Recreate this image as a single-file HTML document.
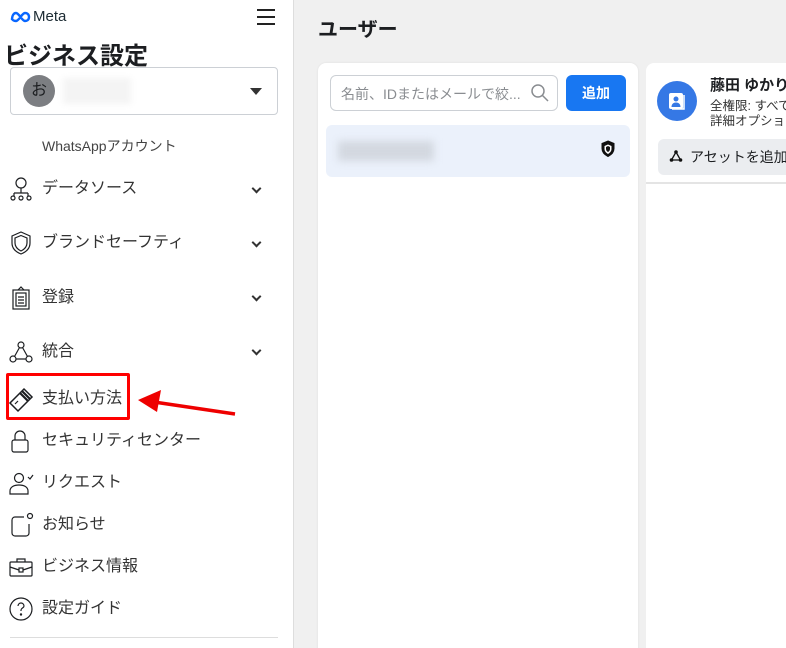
<!DOCTYPE html>
<html><head><meta charset="utf-8"><style>
*{margin:0;padding:0;box-sizing:border-box}
html,body{width:786px;height:648px;overflow:hidden}
body{background:#f0f0f0;font-family:"Liberation Sans","Noto Sans CJK JP",sans-serif;position:relative;color:#1c1e21}
.a{position:absolute}
#side{left:0;top:0;width:294px;height:648px;background:#fff;border-right:1px solid #ddd}
.it{position:absolute;left:42px;font-size:16px;color:#333;line-height:20px}
.chev{position:absolute;left:253px;width:7px;height:7px;border-right:2px solid #333;border-bottom:2px solid #333;transform:rotate(45deg)}
svg.ic{position:absolute;left:8px;fill:none;stroke:#1c1e21;stroke-width:1.2}
</style></head><body>
<div id="side" class="a">
  <svg class="a" style="left:10px;top:11px" width="22" height="12" viewBox="0 0 22 12"><path d="M2 9C2 4 4 2 6 2c3 0 6 8 9 8 2 0 4-1 4-4s-2-4-4-4c-3 0-6 8-9 8-2 0-4-1-4-3" fill="none" stroke="#0866ff" stroke-width="2.4"/></svg>
  <div class="a" style="left:33px;top:8px;font-size:15px;color:#1c2b33">Meta</div>
  <div class="a" style="left:257px;top:9px;width:18px;height:2px;background:#222;box-shadow:0 7px 0 #222,0 14px 0 #222"></div>
  <div class="a" style="left:4px;top:36px;font-size:24px;font-weight:bold;color:#1c1e21">ビジネス設定</div>
  <div class="a" style="left:10px;top:67px;width:268px;height:48px;border:1px solid #ccd0d5;border-radius:4px"></div>
  <div class="a" style="left:23px;top:75px;width:32px;height:32px;border-radius:50%;background:#7c7e82;color:#1c1e21;font-size:16px;text-align:center;line-height:32px">お</div>
  <div class="a" style="left:63px;top:78px;width:68px;height:26px;background:#f4f4f4;filter:blur(3px)"></div>
  <div class="a" style="left:250px;top:88px;border-left:6px solid transparent;border-right:6px solid transparent;border-top:7px solid #333"></div>
  <div class="a" style="left:42px;top:136px;font-size:14px;color:#444">WhatsAppアカウント</div>

  <svg class="ic" style="top:176px" width="26" height="26" viewBox="0 0 26 26"><circle cx="13" cy="7" r="5"/><path d="M13 12v5M6 17h14M6 17v3M20 17v3"/><circle cx="5" cy="22" r="2"/><circle cx="13" cy="22" r="2"/><circle cx="21" cy="22" r="2"/></svg>
  <div class="it" style="top:179px">データソース</div><div class="chev" style="top:185px"></div>
  <svg class="ic" style="top:230px" width="26" height="26" viewBox="0 0 26 26"><path d="M13 2l9 4v7c0 6-4 9-9 11-5-2-9-5-9-11V6z"/><path d="M13 5.5l6 2.5v5c0 4-3 6.5-6 8-3-1.5-6-4-6-8V8z"/></svg>
  <div class="it" style="top:233px">ブランドセーフティ</div><div class="chev" style="top:239px"></div>
  <svg class="ic" style="top:285px" width="26" height="26" viewBox="0 0 26 26"><rect x="5" y="5" width="16" height="19"/><rect x="8" y="8" width="10" height="13"/><path d="M10 5l3-3 3 3M10 12h6M10 15h6M10 18h6"/></svg>
  <div class="it" style="top:288px">登録</div><div class="chev" style="top:293px"></div>
  <svg class="ic" style="top:339px" width="26" height="26" viewBox="0 0 26 26"><circle cx="13" cy="6" r="3"/><circle cx="5" cy="20" r="3"/><circle cx="21" cy="20" r="3"/><path d="M11.5 8.5L6.5 17.5M14.5 8.5l5 9M8 20h10"/></svg>
  <div class="it" style="top:342px">統合</div><div class="chev" style="top:347px"></div>

  <div class="a" style="left:6px;top:373px;width:124px;height:47px;border:3px solid #f00;border-radius:2px"></div>
  <svg class="ic" style="top:387px" width="26" height="26" viewBox="0 0 26 26"><path d="M16 2l8 8L10 24l-8-8z" stroke-width="1.5"/><path d="M14 4l8 8M12 6l8 8" stroke-width="2.2"/><path d="M7 17l3-3" /></svg>
  <div class="it" style="top:389px">支払い方法</div>
  <svg class="a" style="left:136px;top:385px" width="104" height="34" viewBox="0 0 104 34"><path d="M99 29L18 17" stroke="#e00" stroke-width="3.5"/><path d="M2 15l23-10-4 22z" fill="#e00"/></svg>

  <svg class="ic" style="top:428px" width="26" height="26" viewBox="0 0 26 26"><rect x="4" y="12" width="16" height="12" rx="2"/><path d="M7 12V8a5 5 0 0110 0v4"/></svg>
  <div class="it" style="top:431px">セキュリティセンター</div>
  <svg class="ic" style="top:470px" width="26" height="26" viewBox="0 0 26 26"><circle cx="11" cy="8" r="4.5"/><path d="M2 24v-3c0-4 4-6 9-6s9 2 9 6v3z"/><path d="M20 7l2 2 3-4"/></svg>
  <div class="it" style="top:473px">リクエスト</div>
  <svg class="ic" style="top:512px" width="26" height="26" viewBox="0 0 26 26"><path d="M16 5H7a3 3 0 00-3 3v13a3 3 0 003 3h11a3 3 0 003-3v-9"/><circle cx="22" cy="4" r="2.5"/></svg>
  <div class="it" style="top:515px">お知らせ</div>
  <svg class="ic" style="top:554px" width="26" height="26" viewBox="0 0 26 26"><rect x="2" y="8" width="22" height="14" rx="1"/><path d="M9 8V5h8v3M2 13l9 3M24 13l-9 3"/><rect x="11" y="14" width="4" height="4"/></svg>
  <div class="it" style="top:557px">ビジネス情報</div>
  <svg class="ic" style="top:596px" width="26" height="26" viewBox="0 0 26 26"><circle cx="13" cy="13" r="11"/><path d="M10 10a3 3 0 116 0c0 2-3 2-3 4v1"/><circle cx="13" cy="18.5" r=".6" fill="#1c1e21"/></svg>
  <div class="it" style="top:599px">設定ガイド</div>
  <div class="a" style="left:10px;top:637px;width:268px;height:1px;background:#ddd"></div>
</div>

<div class="a" style="left:318px;top:13px;font-size:20px;font-weight:bold">ユーザー</div>

<div class="a" style="left:318px;top:63px;width:320px;height:600px;background:#fff;border-radius:8px;box-shadow:0 0 2px rgba(0,0,0,.08)"></div>
<div class="a" style="left:330px;top:75px;width:228px;height:36px;border:1px solid #ccd0d5;border-radius:6px"></div>
<div class="a" style="left:341px;top:84px;font-size:14px;color:#8a8d91">名前、IDまたはメールで絞...</div>
<svg class="a" style="left:530px;top:83px" width="20" height="20" viewBox="0 0 20 20"><circle cx="8" cy="8" r="6" fill="none" stroke="#8a8d91" stroke-width="1.5"/><path d="M12.5 12.5L18 18" stroke="#8a8d91" stroke-width="1.5"/></svg>
<div class="a" style="left:566px;top:75px;width:60px;height:36px;background:#1877f2;border-radius:6px;color:#fff;font-size:14px;font-weight:bold;text-align:center;line-height:36px">追加</div>
<div class="a" style="left:326px;top:125px;width:304px;height:52px;background:#ebf1fb;border-radius:6px"></div>
<div class="a" style="left:338px;top:141px;width:96px;height:20px;background:#d3d8e0;filter:blur(4px)"></div>
<svg class="a" style="left:600px;top:140px" width="16" height="18" viewBox="0 0 16 18"><path d="M8 1l6 2.5v5c0 4-3 6.5-6 8-3-1.5-6-4-6-8v-5z" fill="#111" stroke="#111" stroke-width="1"/><path d="M8 4.5l3.5 1.5v3c0 2.5-2 4-3.5 5-1.5-1-3.5-2.5-3.5-5V6z" fill="#fff"/><path d="M8 6l2 1v2c0 1.5-1 2.5-2 3-1-.5-2-1.5-2-3V7z" fill="#111"/></svg>

<div class="a" style="left:646px;top:63px;width:150px;height:600px;background:#fff;border-radius:8px 0 0 0"></div>
<div class="a" style="left:646px;top:182px;width:150px;height:2px;background:#e4e4e4"></div>
<div class="a" style="left:657px;top:81px;width:40px;height:40px;border-radius:50%;background:#3578e5"></div>
<svg class="a" style="left:667px;top:91px" width="20" height="20" viewBox="0 0 20 20"><rect x="2" y="2" width="14" height="16" rx="2" fill="#fff"/><circle cx="9" cy="8" r="2.5" fill="#3578e5"/><path d="M4.5 16c0-3 2-4.5 4.5-4.5s4.5 1.5 4.5 4.5z" fill="#3578e5"/><path d="M17 4v14H5" stroke="#fff" stroke-width="1.5" fill="none"/></svg>
<div class="a" style="left:710px;top:74px;font-size:15px;font-weight:bold;white-space:nowrap">藤田 ゆかり</div>
<div class="a" style="left:710px;top:95px;font-size:12.5px;white-space:nowrap;color:#333">全権限: すべて</div>
<div class="a" style="left:710px;top:110px;font-size:12.5px;white-space:nowrap;color:#333">詳細オプション</div>
<div class="a" style="left:658px;top:139px;width:140px;height:36px;background:#ebedf0;border-radius:6px 0 0 6px"></div>
<svg class="a" style="left:669px;top:149px" width="14" height="14" viewBox="0 0 14 14"><circle cx="7" cy="3" r="1.8" fill="#111"/><circle cx="2.5" cy="11" r="1.8" fill="#111"/><circle cx="11.5" cy="11" r="1.8" fill="#111"/><path d="M7 3L2.5 11h9z" fill="none" stroke="#111" stroke-width="1.3"/></svg>
<div class="a" style="left:690px;top:147px;font-size:14px;white-space:nowrap">アセットを追加</div>
</body></html>
